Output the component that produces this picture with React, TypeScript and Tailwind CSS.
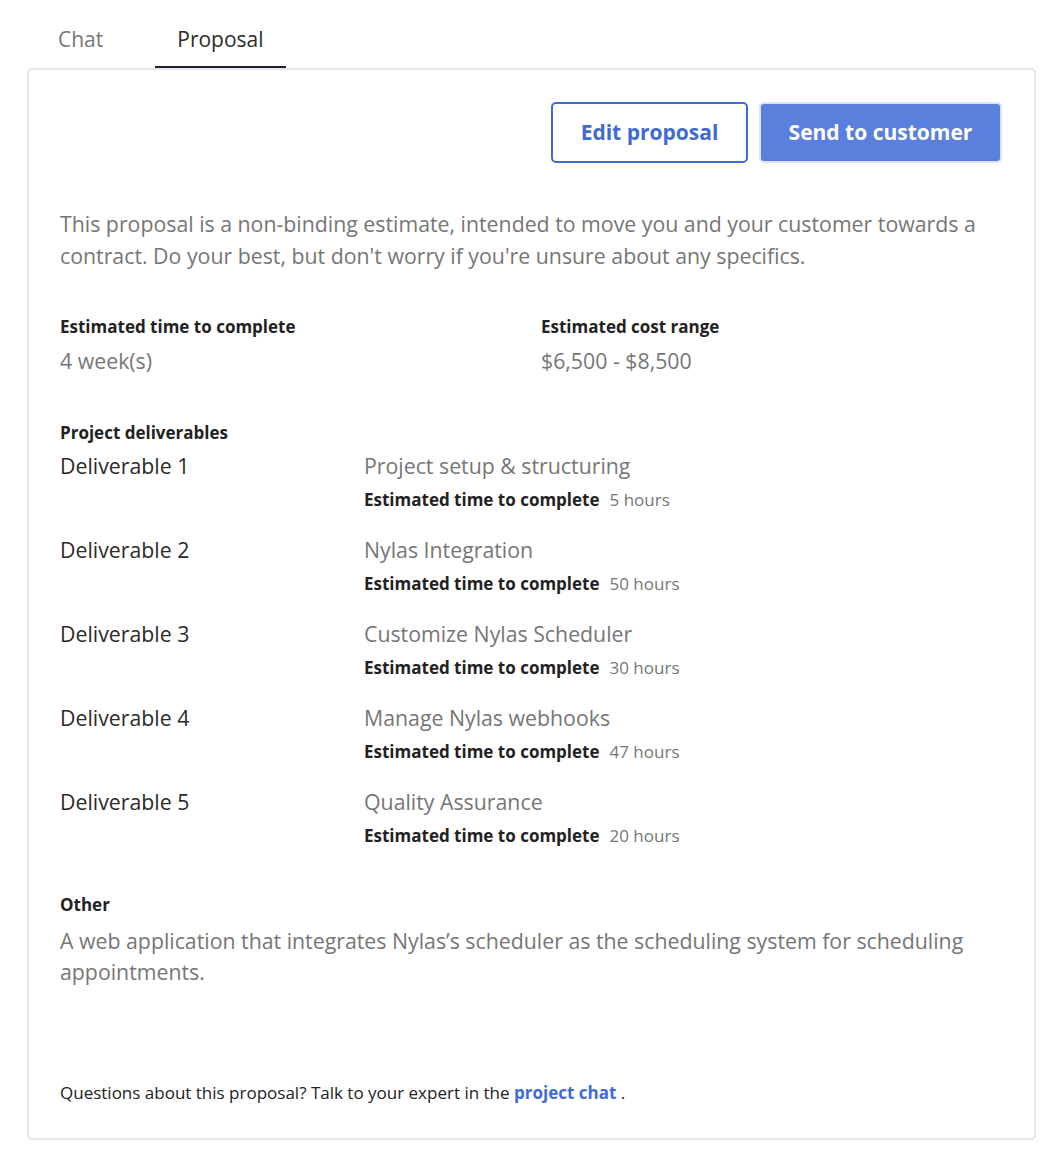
import React from "react";

const deliverables = [
  { name: "Deliverable 1", title: "Project setup & structuring", hours: "5 hours" },
  { name: "Deliverable 2", title: "Nylas Integration", hours: "50 hours" },
  { name: "Deliverable 3", title: "Customize Nylas Scheduler", hours: "30 hours" },
  { name: "Deliverable 4", title: "Manage Nylas webhooks", hours: "47 hours" },
  { name: "Deliverable 5", title: "Quality Assurance", hours: "20 hours" },
];

export default function App() {
  return (
    <div
      className="min-h-[1166px] bg-white pt-[13px]"
      style={{ fontFamily: '"Open Sans", "Noto Sans", sans-serif' }}
    >
      {/* tabs */}
      <div className="flex pl-[36px] gap-[30px] relative z-10">
        <div className="px-[22px] pt-[12px] pb-[15px] text-[21px] leading-[28px] text-[#777]">Chat</div>
        <div className="px-[22px] pt-[12px] pb-[13px] text-[21px] leading-[28px] text-[#2b2b2b] border-b-2 border-[#1f2131]">
          Proposal
        </div>
      </div>

      <div className="ml-[27px] w-[1009px] border-2 border-[#e6e6e6] rounded-[5px] pt-[32px] pb-[33px] pl-[31px] pr-[32px]">
        <div className="flex justify-end gap-[11px]">
          <button className="h-[61px] w-[197px] rounded-[5px] border-2 border-[#4169d6] bg-white text-[21px] font-bold text-[#4169d6]">
            Edit proposal
          </button>
          <button className="h-[61px] w-[243px] rounded-[5px] border-2 border-[#dde3f2] bg-[#5b7fdc] text-[21px] font-bold text-white">
            Send to customer
          </button>
        </div>

        <p className="mt-[45px] text-[21.3px] leading-[32px] text-[#767676]">
          This proposal is a non-binding estimate, intended to move you and your customer towards a contract. Do your
          best, but don't worry if you're unsure about any specifics.
        </p>

        <div className="mt-[43px] grid grid-cols-2 gap-[20px]">
          <div>
            <div className="text-[17px] leading-[24px] font-bold text-[#222]">Estimated time to complete</div>
            <div className="mt-[7px] text-[21.3px] leading-[30px] text-[#767676]">4 week(s)</div>
          </div>
          <div>
            <div className="text-[17px] leading-[24px] font-bold text-[#222]">Estimated cost range</div>
            <div className="mt-[7px] text-[21.3px] leading-[30px] text-[#767676]">$6,500 - $8,500</div>
          </div>
        </div>

        <div className="mt-[45px] text-[17px] leading-[24px] font-bold text-[#222]">Project deliverables</div>
        <div className="mt-[7px] flex flex-col gap-[24px]">
          {deliverables.map((d) => (
            <div key={d.name} className="flex">
              <div className="w-[304px] shrink-0 text-[21.3px] leading-[28px] text-[#2b2b2b]">{d.name}</div>
              <div>
                <div className="text-[21.3px] leading-[28px] text-[#767676]">{d.title}</div>
                <div className="mt-[8px] text-[17px] leading-[24px]">
                  <span className="font-bold text-[#222]">Estimated time to complete</span>
                  <span className="ml-[10px] text-[#767676]">{d.hours}</span>
                </div>
              </div>
            </div>
          ))}
        </div>

        <div className="mt-[45px] text-[17px] leading-[24px] font-bold text-[#222]">Other</div>
        <p className="mt-[8px] text-[21.3px] leading-[31px] text-[#767676]">
          A web application that integrates Nylas’s scheduler as the scheduling system for scheduling appointments.
        </p>

        <p className="mt-[94px] text-[17px] leading-[24px] text-[#222]">
          Questions about this proposal? Talk to your expert in the{" "}
          <a className="font-bold text-[#3f6bd8] cursor-pointer">project chat</a> .
        </p>
      </div>
    </div>
  );
}
